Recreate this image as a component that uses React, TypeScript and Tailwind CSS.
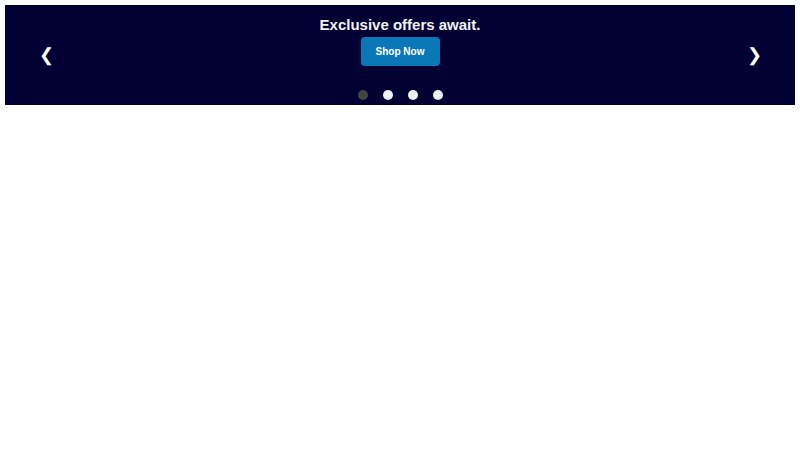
import React from "react";

export default function App() {
  const dots = [0, 1, 2, 3];
  return (
    <div className="p-[5px] bg-white" style={{ fontFamily: '"Liberation Sans", Arial, sans-serif' }}>
      <div className="relative h-[100px] bg-[#000033] flex flex-col items-center">
        <h2 className="pt-[11px] text-[15px] leading-[17px] font-bold text-[#f2f2f2]">Exclusive offers await.</h2>
        <button className="mt-[4px] w-[79px] h-[29px] rounded-[4px] bg-[#0a77b8] text-white text-[10px] font-bold">
          Shop Now
        </button>
        <div className="mt-[24px] flex gap-[15px]">
          {dots.map((d) => (
            <span
              key={d}
              className={
                d === 0
                  ? "block w-[10px] h-[10px] rounded-full bg-[#444444]"
                  : "block w-[10px] h-[10px] rounded-full bg-[#f0f0f0]"
              }
            />
          ))}
        </div>
        <span className="absolute left-[34px] top-[50px] -translate-y-1/2 text-white text-[18px] leading-none select-none">❮</span>
        <span className="absolute right-[33px] top-[50px] -translate-y-1/2 text-white text-[18px] leading-none select-none">❯</span>
      </div>
    </div>
  );
}
